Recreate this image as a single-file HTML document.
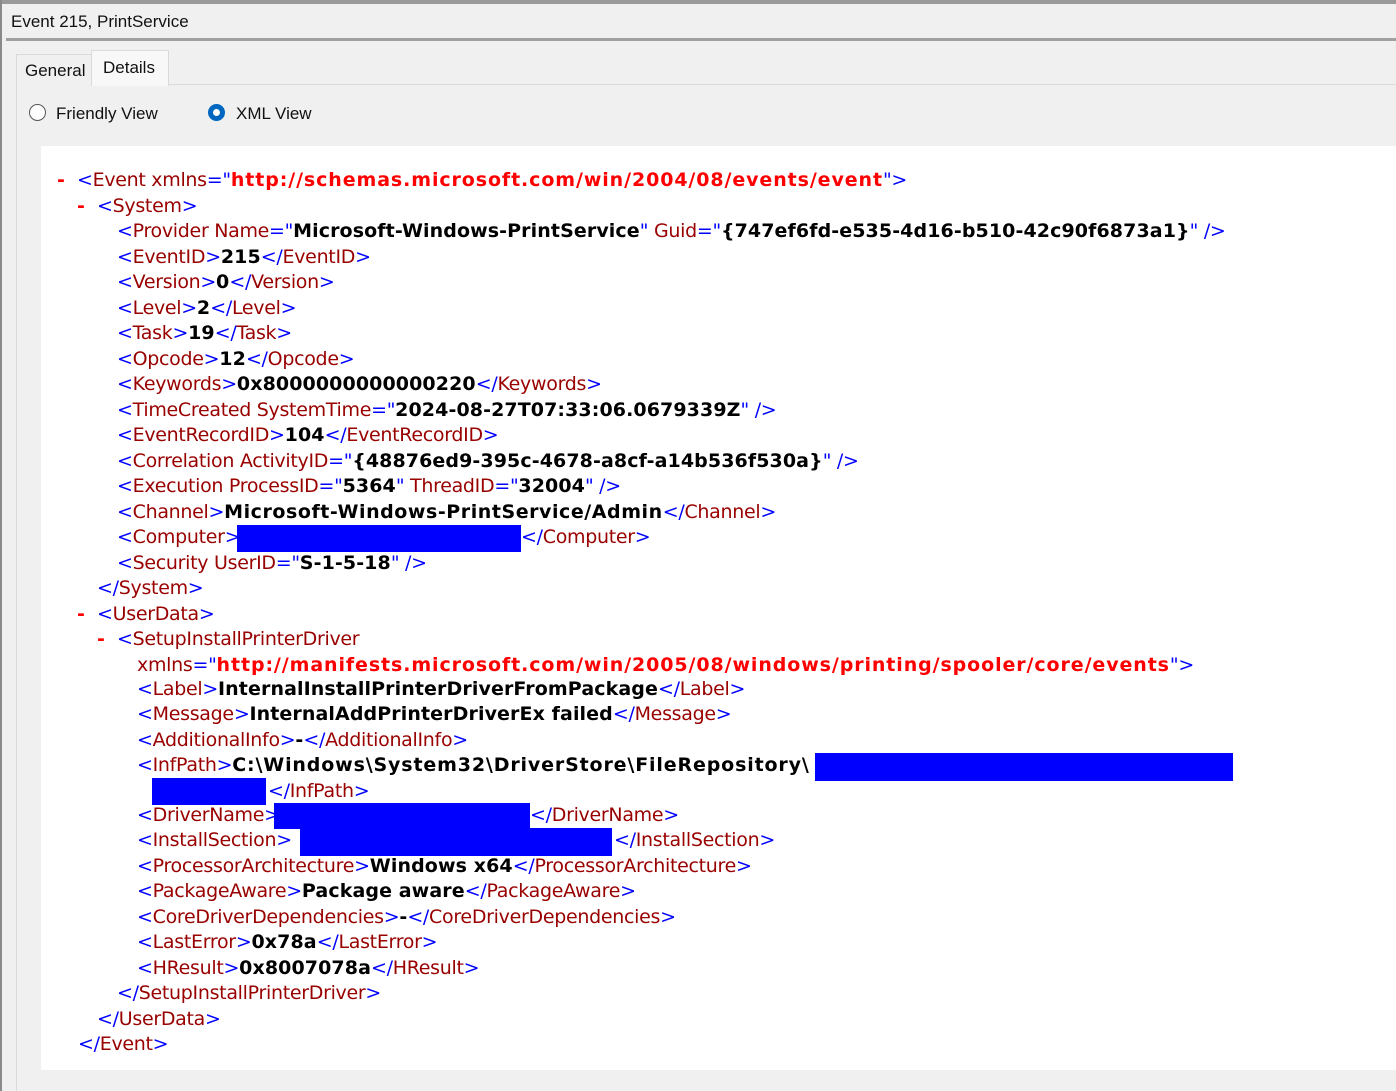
<!DOCTYPE html>
<html><head><meta charset="utf-8"><style>
html,body{margin:0;padding:0}
body{width:1396px;height:1091px;background:#f0f0f0;position:relative;overflow:hidden;font-family:"Liberation Sans",sans-serif}
.lb{position:absolute;left:0;top:0;width:2px;height:1091px;background:#8a8a8a}
.tb{position:absolute;left:0;top:0;width:1396px;height:4px;background:#9a9a9a}
.title{position:absolute;left:11px;top:12px;font-size:17px;color:#111}
.tline{position:absolute;left:6px;top:38px;width:1390px;height:3px;background:#a0a0a0}
.panel{position:absolute;left:16px;top:84px;right:0;bottom:0;background:#f0f0f0;border-left:1px solid #dadada;border-top:1px solid #dadada}
.tab{position:absolute;font-size:17px;color:#111}
.t1{left:16px;top:54px;width:74px;height:30px;background:#f0f0f0;border:1px solid #dadada;border-bottom:none}
.t2{left:91px;top:50px;width:76px;height:35px;background:#f8f8f8;border:1px solid #dadada;border-bottom:none}
.radio{position:absolute;top:104px;width:17px;height:17px;border-radius:50%;box-sizing:border-box}
.r1{left:29px;border:1.5px solid #555;background:#fff}
.r2{left:208px;border:5px solid #0067c0;background:#fff}
.rl{position:absolute;top:104px;font-size:17px;color:#111}
.box{position:absolute;left:41px;top:146px;width:1355px;height:924px;background:#fff}
.l{position:absolute;white-space:pre;font-family:"DejaVu Sans",Verdana,sans-serif;font-size:19px;line-height:25px;color:#000;letter-spacing:-0.3px}
.m{color:#0000ff}.t{color:#990000}.b{font-weight:bold;color:#000;letter-spacing:0.1px}.ns{font-weight:bold;color:#ff0000;letter-spacing:0.9px}.p{letter-spacing:0.55px}
.d{color:#ff0000;font-weight:bold;display:inline-block;width:20px}
.red{position:absolute;background:#0000ff}
</style></head><body>
<div class="tb"></div><div class="lb"></div>
<div class="title">Event 215, PrintService</div>
<div class="tline"></div>
<div class="panel"></div>
<div class="tab t1"><span style="position:absolute;left:8px;top:6px">General</span></div>
<div class="tab t2"><span style="position:absolute;left:11px;top:7px">Details</span></div>
<div class="radio r1"></div><div class="rl" style="left:56px">Friendly View</div>
<div class="radio r2"></div><div class="rl" style="left:236px">XML View</div>
<div class="box"></div>

<div class="l" style="left:57px;top:168px"><span class="d">-</span><span class="m">&lt;</span><span class="t">Event xmlns</span><span class="m">="</span><span class="ns">http://schemas.microsoft.com/win/2004/08/events/event</span><span class="m">"&gt;</span></div>
<div class="l" style="left:77px;top:194px"><span class="d">-</span><span class="m">&lt;</span><span class="t">System</span><span class="m">&gt;</span></div>
<div class="l" style="left:117px;top:219px"><span class="m">&lt;</span><span class="t">Provider Name</span><span class="m">="</span><span class="b">Microsoft-Windows-PrintService</span><span class="m">"</span><span class="t"> Guid</span><span class="m">="</span><span class="b">{747ef6fd-e535-4d16-b510-42c90f6873a1}</span><span class="m">" /&gt;</span></div>
<div class="l" style="left:117px;top:245px"><span class="m">&lt;</span><span class="t">EventID</span><span class="m">&gt;</span><span class="b">215</span><span class="m">&lt;/</span><span class="t">EventID</span><span class="m">&gt;</span></div>
<div class="l" style="left:117px;top:270px"><span class="m">&lt;</span><span class="t">Version</span><span class="m">&gt;</span><span class="b">0</span><span class="m">&lt;/</span><span class="t">Version</span><span class="m">&gt;</span></div>
<div class="l" style="left:117px;top:296px"><span class="m">&lt;</span><span class="t">Level</span><span class="m">&gt;</span><span class="b">2</span><span class="m">&lt;/</span><span class="t">Level</span><span class="m">&gt;</span></div>
<div class="l" style="left:117px;top:321px"><span class="m">&lt;</span><span class="t">Task</span><span class="m">&gt;</span><span class="b">19</span><span class="m">&lt;/</span><span class="t">Task</span><span class="m">&gt;</span></div>
<div class="l" style="left:117px;top:347px"><span class="m">&lt;</span><span class="t">Opcode</span><span class="m">&gt;</span><span class="b">12</span><span class="m">&lt;/</span><span class="t">Opcode</span><span class="m">&gt;</span></div>
<div class="l" style="left:117px;top:372px"><span class="m">&lt;</span><span class="t">Keywords</span><span class="m">&gt;</span><span class="b">0x8000000000000220</span><span class="m">&lt;/</span><span class="t">Keywords</span><span class="m">&gt;</span></div>
<div class="l" style="left:117px;top:398px"><span class="m">&lt;</span><span class="t">TimeCreated SystemTime</span><span class="m">="</span><span class="b">2024-08-27T07:33:06.0679339Z</span><span class="m">" /&gt;</span></div>
<div class="l" style="left:117px;top:423px"><span class="m">&lt;</span><span class="t">EventRecordID</span><span class="m">&gt;</span><span class="b">104</span><span class="m">&lt;/</span><span class="t">EventRecordID</span><span class="m">&gt;</span></div>
<div class="l" style="left:117px;top:449px"><span class="m">&lt;</span><span class="t">Correlation ActivityID</span><span class="m">="</span><span class="b">{48876ed9-395c-4678-a8cf-a14b536f530a}</span><span class="m">" /&gt;</span></div>
<div class="l" style="left:117px;top:474px"><span class="m">&lt;</span><span class="t">Execution ProcessID</span><span class="m">="</span><span class="b">5364</span><span class="m">"</span><span class="t"> ThreadID</span><span class="m">="</span><span class="b">32004</span><span class="m">" /&gt;</span></div>
<div class="l" style="left:117px;top:500px"><span class="m">&lt;</span><span class="t">Channel</span><span class="m">&gt;</span><span class="b p">Microsoft-Windows-PrintService/Admin</span><span class="m">&lt;/</span><span class="t">Channel</span><span class="m">&gt;</span></div>
<div class="l" style="left:117px;top:525px"><span class="m">&lt;</span><span class="t">Computer</span><span class="m">&gt;</span></div>
<div class="red" style="left:237px;top:525px;width:284px;height:27px"></div>
<div class="l" style="left:521px;top:525px"><span class="m">&lt;/</span><span class="t">Computer</span><span class="m">&gt;</span></div>
<div class="l" style="left:117px;top:551px"><span class="m">&lt;</span><span class="t">Security UserID</span><span class="m">="</span><span class="b">S-1-5-18</span><span class="m">" /&gt;</span></div>
<div class="l" style="left:97px;top:576px"><span class="m">&lt;/</span><span class="t">System</span><span class="m">&gt;</span></div>
<div class="l" style="left:77px;top:602px"><span class="d">-</span><span class="m">&lt;</span><span class="t">UserData</span><span class="m">&gt;</span></div>
<div class="l" style="left:97px;top:627px"><span class="d">-</span><span class="m">&lt;</span><span class="t">SetupInstallPrinterDriver</span></div>
<div class="l" style="left:137px;top:653px"><span class="t">xmlns</span><span class="m">="</span><span class="ns">http://manifests.microsoft.com/win/2005/08/windows/printing/spooler/core/events</span><span class="m">"&gt;</span></div>
<div class="l" style="left:137px;top:677px"><span class="m">&lt;</span><span class="t">Label</span><span class="m">&gt;</span><span class="b">InternalInstallPrinterDriverFromPackage</span><span class="m">&lt;/</span><span class="t">Label</span><span class="m">&gt;</span></div>
<div class="l" style="left:137px;top:702px"><span class="m">&lt;</span><span class="t">Message</span><span class="m">&gt;</span><span class="b">InternalAddPrinterDriverEx failed</span><span class="m">&lt;/</span><span class="t">Message</span><span class="m">&gt;</span></div>
<div class="l" style="left:137px;top:728px"><span class="m">&lt;</span><span class="t">AdditionalInfo</span><span class="m">&gt;</span><span class="b">-</span><span class="m">&lt;/</span><span class="t">AdditionalInfo</span><span class="m">&gt;</span></div>
<div class="l" style="left:137px;top:753px"><span class="m">&lt;</span><span class="t">InfPath</span><span class="m">&gt;</span><span class="b" style="letter-spacing:0.85px">C:\Windows\System32\DriverStore\FileRepository\</span></div>
<div class="red" style="left:815px;top:753px;width:418px;height:28px"></div>
<div class="red" style="left:152px;top:778px;width:114px;height:27px"></div>
<div class="l" style="left:268px;top:779px"><span class="m">&lt;/</span><span class="t">InfPath</span><span class="m">&gt;</span></div>
<div class="l" style="left:137px;top:803px"><span class="m">&lt;</span><span class="t">DriverName</span><span class="m">&gt;</span></div>
<div class="red" style="left:274px;top:803px;width:256px;height:26px"></div>
<div class="l" style="left:530px;top:803px"><span class="m">&lt;/</span><span class="t">DriverName</span><span class="m">&gt;</span></div>
<div class="l" style="left:137px;top:828px"><span class="m">&lt;</span><span class="t">InstallSection</span><span class="m">&gt;</span></div>
<div class="red" style="left:300px;top:828px;width:312px;height:28px"></div>
<div class="l" style="left:614px;top:828px"><span class="m">&lt;/</span><span class="t">InstallSection</span><span class="m">&gt;</span></div>
<div class="l" style="left:137px;top:854px"><span class="m">&lt;</span><span class="t">ProcessorArchitecture</span><span class="m">&gt;</span><span class="b">Windows x64</span><span class="m">&lt;/</span><span class="t">ProcessorArchitecture</span><span class="m">&gt;</span></div>
<div class="l" style="left:137px;top:879px"><span class="m">&lt;</span><span class="t">PackageAware</span><span class="m">&gt;</span><span class="b">Package aware</span><span class="m">&lt;/</span><span class="t">PackageAware</span><span class="m">&gt;</span></div>
<div class="l" style="left:137px;top:905px"><span class="m">&lt;</span><span class="t">CoreDriverDependencies</span><span class="m">&gt;</span><span class="b">-</span><span class="m">&lt;/</span><span class="t">CoreDriverDependencies</span><span class="m">&gt;</span></div>
<div class="l" style="left:137px;top:930px"><span class="m">&lt;</span><span class="t">LastError</span><span class="m">&gt;</span><span class="b">0x78a</span><span class="m">&lt;/</span><span class="t">LastError</span><span class="m">&gt;</span></div>
<div class="l" style="left:137px;top:956px"><span class="m">&lt;</span><span class="t">HResult</span><span class="m">&gt;</span><span class="b">0x8007078a</span><span class="m">&lt;/</span><span class="t">HResult</span><span class="m">&gt;</span></div>
<div class="l" style="left:117px;top:981px"><span class="m">&lt;/</span><span class="t">SetupInstallPrinterDriver</span><span class="m">&gt;</span></div>
<div class="l" style="left:97px;top:1007px"><span class="m">&lt;/</span><span class="t">UserData</span><span class="m">&gt;</span></div>
<div class="l" style="left:78px;top:1032px"><span class="m">&lt;/</span><span class="t">Event</span><span class="m">&gt;</span></div>
</body></html>
